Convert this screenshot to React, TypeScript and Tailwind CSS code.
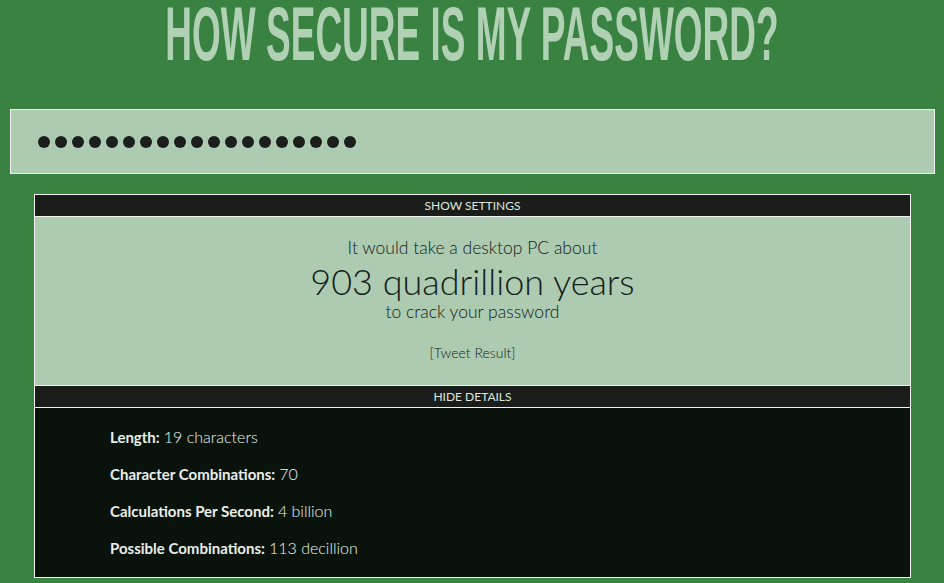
const details = [
  { label: "Length:", value: "19 characters" },
  { label: "Character Combinations:", value: "70" },
  { label: "Calculations Per Second:", value: "4 billion" },
  { label: "Possible Combinations:", value: "113 decillion" },
];

const lato = "font-['Lato','Liberation_Sans',sans-serif]";

export default function App() {
  return (
    <div className="min-h-[583px] w-full bg-[#3a8242] pb-4">
      {/* title */}
      <div className="flex h-[109px] w-full items-start justify-center">
        <h1 className="mt-[-3px] origin-top scale-y-[2.03] whitespace-nowrap font-['Liberation_Sans',Arial,sans-serif] text-[37px] font-bold leading-[37px] text-[#b1d1b4]">
          HOW SECURE IS MY PASSWORD?
        </h1>
      </div>

      {/* password field */}
      <div className="ml-[10px] flex h-[65px] w-[925px] items-center gap-[5px] border border-[#f2f2f2] bg-[#adcbb1] pl-[27px]">
        {Array.from({ length: 19 }).map((_, i) => (
          <div key={i} className="h-[12px] w-[12px] rounded-full bg-[#1b1e1b]" />
        ))}
      </div>

      {/* results */}
      <div className={`ml-[34px] mt-[20px] w-[877px] border border-[#f2f2f2] ${lato}`}>
        <div className="flex h-[22px] items-center justify-center border-b border-[#f2f2f2] bg-[#1a1d1a] text-[12px] uppercase text-[#dfe6df]">
          Show Settings
        </div>
        <div className="flex h-[169px] flex-col items-center border-b border-[#f2f2f2] bg-[#adcbb1] pt-[20px] font-light text-[#132019]">
          <div className="text-[17.5px] leading-[22px]">It would take a desktop PC about</div>
          <div className="mt-[2px] text-[36px] leading-[40px]">903 quadrillion years</div>
          <div className="text-[17.5px] leading-[22px]">to crack your password</div>
          <div className="mt-[20px] text-[14px] leading-[20px]">[Tweet Result]</div>
        </div>
        <div className="flex h-[22px] items-center justify-center border-b border-[#f2f2f2] bg-[#1a1d1a] text-[12px] uppercase text-[#dfe6df]">
          Hide Details
        </div>
        <div className="flex h-[169px] flex-col gap-[15px] bg-[#09130c] pl-[75px] pt-[18px]">
          {details.map((d) => (
            <div key={d.label} className="leading-[22px]">
              <span className="text-[15px] font-bold text-[#e8eee8]">{d.label}</span>{" "}
              <span className="text-[16px] font-light text-[#eef3ee]">{d.value}</span>
            </div>
          ))}
        </div>
      </div>
    </div>
  );
}
